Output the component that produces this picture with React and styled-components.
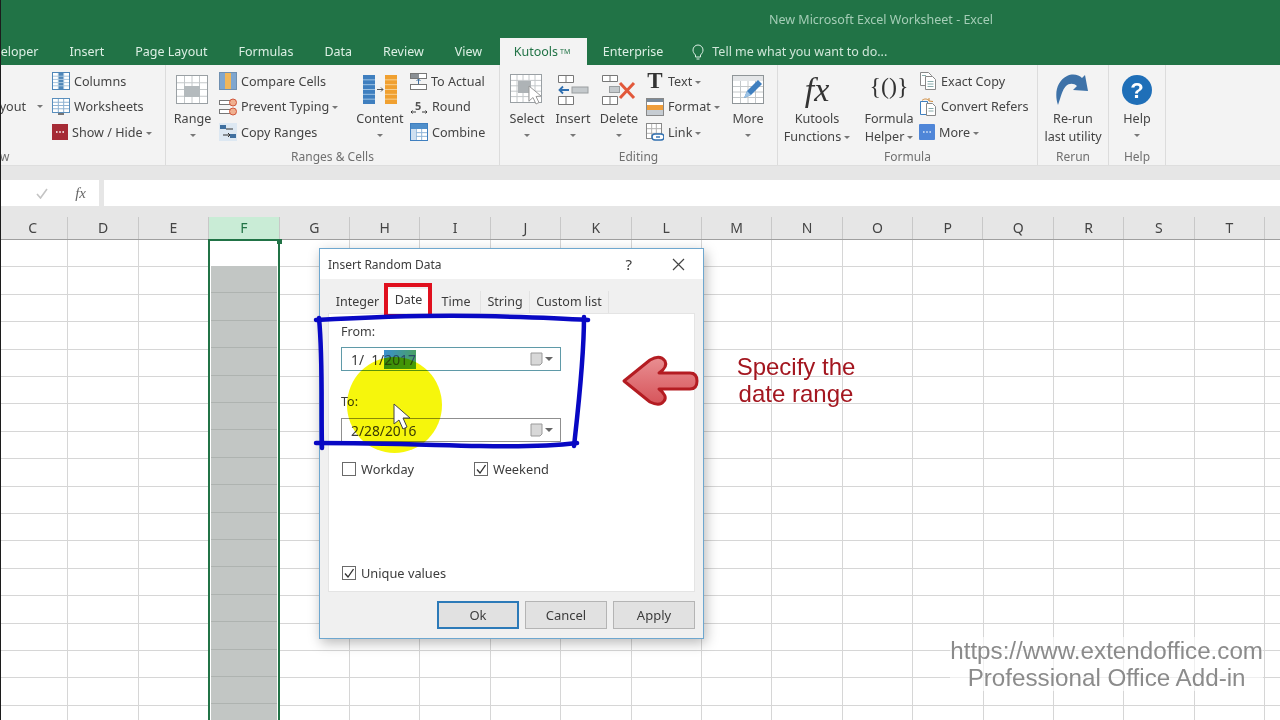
import React from 'react';
import styled, { createGlobalStyle } from 'styled-components';

const UI_FONT = '"Noto Sans", "Open Sans", sans-serif';

const GlobalStyle = createGlobalStyle`
  html, body { margin: 0; padding: 0; background: #fff; }
  #root { width: 1280px; height: 720px; }
`;

const Page = styled.div`
  position: relative;
  width: 1280px;
  height: 720px;
  overflow: hidden;
  display: flex;
  flex-direction: column;
  font-family: ${UI_FONT};
  font-size: 12.6px;
  color: #444;
  background: #fff;
`;

const TitleBar = styled.div`
  height: 38px;
  background: #217346;
  color: #a4cdb6;
  display: flex;
  justify-content: flex-end;
  align-items: center;
  padding: 0 287px 0 0;
  font-size: 12.5px;
`;

const TabStrip = styled.div`
  height: 27px;
  background: #217346;
  display: flex;
  margin-left: -37px;
`;

const Tab = styled.div`
  padding: ${({ $active }) => ($active ? '0 17px 0 14px' : '0 15.5px')};
  margin-left: ${({ $active }) => ($active ? 2 : 0)}px;
  display: flex;
  align-items: center;
  background: ${({ $active }) => ($active ? '#f3f3f3' : 'transparent')};
  color: ${({ $active }) => ($active ? '#217346' : '#dcefe4')};
  white-space: nowrap;
  font-size: 12.5px;
  sup { font-size: 7px; margin-left: 2px; }
`;

const TellMe = styled(Tab)`
  margin-left: -2px;
  gap: 8px;
  color: #cfe6d8;
`;

const Ribbon = styled.div`
  height: 100px;
  display: flex;
  background: #f3f3f3;
`;

const Group = styled.div`
  width: ${({ $w }) => $w}px;
  flex: none;
  box-sizing: border-box;
  display: flex;
  flex-direction: column;
  border-right: 1px solid #dcdcdc;
`;

const GroupBody = styled.div`
  height: 83px;
  display: flex;
  padding-left: ${({ $pad }) => $pad || 0}px;
  overflow: hidden;
`;

const GroupLabel = styled.div`
  height: 17px;
  line-height: 17px;
  text-align: ${({ $align }) => $align || 'center'};
  font-size: 12px;
  color: #707070;
  overflow: hidden;
`;

const BigButton = styled.div`
  width: ${({ $w }) => $w}px;
  flex: none;
  display: flex;
  flex-direction: column;
  align-items: center;
  margin-left: ${({ $ml }) => $ml || 0}px;
`;

const BigIcon = styled.div`
  height: 45px;
  display: flex;
  align-items: center;
  justify-content: center;
  padding-top: 4px;
  box-sizing: border-box;
`;

const BigLabel = styled.div`
  line-height: 18px;
  text-align: center;
  white-space: nowrap;
`;

const CaretRow = styled.div`
  height: 14px;
  display: flex;
  align-items: center;
`;

const Caret = styled.span`
  display: inline-block;
  width: 0;
  height: 0;
  margin-left: ${({ $ml }) => $ml ?? 3}px;
  vertical-align: middle;
  border-left: 3px solid transparent;
  border-right: 3px solid transparent;
  border-top: 3px solid #777;
`;

const List = styled.div`
  width: ${({ $w }) => $w}px;
  flex: none;
  padding-top: 3.5px;
  margin-left: ${({ $ml }) => $ml || 0}px;
`;

const ListRow = styled.div`
  height: 25.5px;
  display: flex;
  align-items: center;
  gap: 4px;
  white-space: nowrap;
`;

const ClippedLayout = styled.div`
  width: 52px;
  flex: none;
  margin-top: 29px;
  height: 25px;
  line-height: 25px;
  white-space: nowrap;
  display: flex;
  justify-content: flex-end;
  align-items: center;
  padding-right: 9px;
  box-sizing: border-box;
`;

const FormulaRow = styled.div`
  height: 42px;
  box-sizing: border-box;
  background: #e6e6e6;
  border-top: 1px solid #dedede;
  padding: 14px 0 1px;
  display: flex;
  gap: 5px;
`;

const FormulaButtons = styled.div`
  width: 99px;
  background: #fff;
  display: flex;
  align-items: center;
  justify-content: flex-end;
  gap: 27px;
  padding-right: 13px;
  box-sizing: border-box;
`;

const FxLabel = styled.span`
  font-family: "Liberation Serif", serif;
  font-style: italic;
  font-size: 15px;
  color: #666;
`;

const FormulaInput = styled.div`
  flex: 1;
  background: #fff;
`;

const ColumnHeaders = styled.div`
  height: 33px;
  box-sizing: border-box;
  padding-top: 10px;
  background: #e6e6e6;
  border-bottom: 1px solid #9f9f9f;
  display: flex;
  margin-left: -2px;
  width: 1290px;
`;

const ColumnCell = styled.div`
  width: 70.4px;
  flex: none;
  box-sizing: border-box;
  text-align: center;
  line-height: 22px;
  font-size: 14px;
  color: ${({ $active }) => ($active ? '#217346' : '#444')};
  background: ${({ $active }) => ($active ? '#c9ecd6' : 'transparent')};
  border-right: 1px solid #c8c8c8;
`;

const Sheet = styled.div`
  flex: 1;
  position: relative;
  background-color: #fff;
  background-image:
    repeating-linear-gradient(to right, transparent 0, transparent 69.4px, #d6d6d6 69.4px, #d6d6d6 70.4px),
    repeating-linear-gradient(to bottom, transparent 0, transparent 26.4px, #d6d6d6 26.4px, #d6d6d6 27.4px);
  background-position: -2px 0, 0 0;
`;

const SelectedColumn = styled.div`
  position: absolute;
  left: 208px;
  top: -1px;
  bottom: -2px;
  width: 72px;
  box-sizing: border-box;
  border: 2px solid #217346;
  display: flex;
  flex-direction: column;
  background: #fff;
  &::after {
    content: '';
    position: absolute;
    right: -4px;
    top: -2px;
    width: 5px;
    height: 5px;
    background: #217346;
  }
`;

const SelectedBlank = styled.div`
  height: 25px;
  flex: none;
`;

const SelectedFill = styled.div`
  flex: 1;
  margin: 0 1px;
  background-color: #c2c6c4;
  background-image: repeating-linear-gradient(to bottom, transparent 0, transparent 26.4px, #aeb3b0 26.4px, #aeb3b0 27.4px);
`;

const Dialog = styled.div`
  position: absolute;
  left: 319px;
  top: 248px;
  width: 385px;
  height: 391px;
  box-sizing: border-box;
  border: 1.5px solid #6ea7cf;
  background: #f0f0f0;
  display: flex;
  flex-direction: column;
  box-shadow: 2px 4px 12px rgba(0, 0, 0, 0.28);
  color: #3c3c3c;
`;

const DialogTitle = styled.div`
  height: 30px;
  flex: none;
  background: #fff;
  display: flex;
  align-items: center;
  padding: 0 18px 0 8px;
  font-size: 12px;
`;

const TitleText = styled.span`
  flex: 1;
`;

const TitleButton = styled.span`
  font-size: 15px;
  margin-right: 40px;
`;

const DialogBody = styled.div`
  flex: 1;
  display: flex;
  flex-direction: column;
  padding: 12px 8px 9px 8px;
  min-height: 0;
`;

const DialogTabs = styled.div`
  height: 22px;
  flex: none;
  display: flex;
  padding-left: 2px;
`;

const DialogTab = styled.div`
  width: ${({ $w }) => $w}px;
  flex: none;
  text-align: center;
  line-height: 22px;
  font-size: 12.5px;
  background: ${({ $active }) => ($active ? '#fff' : '#f0f0f0')};
  margin-top: ${({ $active }) => ($active ? -2 : 0)}px;
  height: ${({ $active }) => ($active ? 24 : 22)}px;
  border-right: 1px solid #e2e2e2;
`;

const Panel = styled.div`
  flex: 1;
  background: #fff;
  border: 1px solid #e4e4e4;
  display: flex;
  flex-direction: column;
  padding: 9px 12px 9px 12px;
  min-height: 0;
`;

const FieldLabel = styled.div`
  line-height: 18px;
  font-size: 12.5px;
  margin-bottom: ${({ $mb }) => $mb}px;
`;

const DateField = styled.div`
  width: 220px;
  height: 24px;
  box-sizing: border-box;
  border: 1px solid ${({ $focus }) => ($focus ? '#5f9aa8' : '#8f8f8f')};
  display: flex;
  align-items: center;
  justify-content: space-between;
  padding: 0 6px 0 9px;
  margin-bottom: ${({ $mb }) => $mb}px;
  font-size: 13.8px;
  white-space: pre;
`;

const Highlight = styled.span`
  background: linear-gradient(100deg, #3a8fd0, #4aa25a);
  color: #2a4a6a;
`;

const CheckLine = styled.div`
  display: flex;
  align-items: center;
  gap: 50px;
  padding-left: 1px;
  margin-top: ${({ $mt }) => $mt};
`;

const CheckItem = styled.label`
  display: flex;
  align-items: center;
  gap: 5px;
  width: ${({ $w }) => $w}px;
  font-size: 12.8px;
  line-height: 18px;
`;

const CheckBox = styled.span`
  width: 12px;
  height: 12px;
  flex: none;
  border: 1.5px solid #6a6a6a;
  background: #fff;
  display: flex;
  align-items: center;
  justify-content: center;
`;

const DialogFooter = styled.div`
  flex: none;
  display: flex;
  justify-content: flex-end;
  gap: 6px;
  padding-top: 9px;
`;

const DialogButton = styled.div`
  width: 82px;
  height: 28px;
  box-sizing: border-box;
  background: #e1e1e1;
  border: ${({ $primary }) => ($primary ? '2px solid #2c7ab8' : '1px solid #b4b4b4')};
  display: flex;
  align-items: center;
  justify-content: center;
  font-size: 13px;
`;

const YellowSpot = styled.div`
  position: absolute;
  left: 347px;
  top: 357px;
  width: 95px;
  height: 96px;
  border-radius: 50%;
  background: #f6f60c;
  mix-blend-mode: multiply;
`;

const Markup = styled.svg`
  position: absolute;
  left: 0;
  top: 0;
  pointer-events: none;
`;

const Callout = styled.div`
  position: absolute;
  left: 716px;
  top: 353px;
  width: 160px;
  text-align: center;
  font-family: "Liberation Sans", Arial, sans-serif;
  font-size: 24px;
  line-height: 27px;
  color: #a3161f;
`;

const Watermark = styled.div`
  position: absolute;
  right: 17px;
  top: 637px;
  text-align: center;
  font-family: "Liberation Sans", Arial, sans-serif;
  font-size: 24.2px;
  line-height: 27px;
  color: #8b8b8b;
  background: rgba(255, 255, 255, 0.6);
`;

const LeftEdge = styled.div`
  position: absolute;
  left: 0;
  top: 0;
  bottom: 0;
  width: 1px;
  background: #1c1c1c;
`;

/* ---- ribbon icons ---- */
const Ico = ({ w, h, children }) => (
  <svg width={w} height={h} viewBox={`0 0 ${w} ${h}`} fill="none">{children}</svg>
);

const gridLines = (x, y, w, h, cols, rows, color) => {
  const lines = [];
  for (let i = 1; i < cols; i++) lines.push(<path key={`c${i}`} d={`M${x + (w / cols) * i} ${y}V${y + h}`} stroke={color} />);
  for (let i = 1; i < rows; i++) lines.push(<path key={`r${i}`} d={`M${x} ${y + (h / rows) * i}H${x + w}`} stroke={color} />);
  return lines;
};

const ColumnsIcon = () => (
  <Ico w={18} h={18}>
    <rect x=".5" y=".5" width="17" height="17" fill="#fff" stroke="#4f86b8" />
    <rect x="6" y="1" width="6" height="16" fill="#4f86b8" />
    {gridLines(1, 1, 16, 16, 3, 5, '#a9c6de')}
  </Ico>
);

const SheetsIcon = () => (
  <Ico w={18} h={18}>
    <rect x=".5" y=".5" width="17" height="14" fill="#fff" stroke="#5a8fbd" />
    {gridLines(1, 1, 16, 13, 3, 4, '#8fb2d2')}
    <path d="M6 16h6" stroke="#777" strokeWidth="2" />
  </Ico>
);

const ShowHideIcon = () => (
  <Ico w={16} h={16}>
    <rect width="16" height="16" fill="#a52a35" />
    <path d="M4 8h1.6M7.2 8h1.6M10.4 8H12" stroke="#fff" strokeWidth="1.6" />
  </Ico>
);

const RangeIcon = () => (
  <Ico w={33} h={30}>
    <rect x=".5" y=".5" width="31" height="28" fill="#fff" stroke="#9aa0a4" />
    {gridLines(1, 1, 30, 27, 4, 4, '#c4c8ca')}
    <rect x="8" y="11" width="16" height="11" fill="#b4babd" />
  </Ico>
);

const CompareIcon = () => (
  <Ico w={18} h={18}>
    <rect x=".5" y=".5" width="17" height="17" fill="#fff" stroke="#6f8fb0" />
    <rect x="1" y="1" width="5" height="16" fill="#7fa6cf" />
    <rect x="6" y="1" width="6" height="16" fill="#f0b65a" />
    <rect x="12" y="1" width="5" height="16" fill="#7fa6cf" />
  </Ico>
);

const PreventIcon = () => (
  <Ico w={18} h={18}>
    <rect x=".5" y="2.5" width="11" height="4" stroke="#777" fill="#fff" />
    <rect x=".5" y="11.5" width="11" height="4" stroke="#777" fill="#fff" />
    <circle cx="14" cy="4.5" r="3.5" fill="#f0b090" stroke="#d0563a" />
    <circle cx="14" cy="13.5" r="3.5" fill="#f0b090" stroke="#d0563a" />
  </Ico>
);

const CopyRangesIcon = () => (
  <Ico w={18} h={18}>
    <rect width="18" height="18" fill="#dde8f2" />
    <rect x="1" y="2" width="6" height="4" fill="#3f6f9f" />
    <rect x="11" y="11" width="6" height="4" fill="#3f6f9f" />
    <path d="M4 12h7M9 10l2 2-2 2M14 6H7" stroke="#333" />
  </Ico>
);

const ContentIcon = () => (
  <Ico w={34} h={29}>
    <rect width="12" height="29" fill="#3f7fbf" />
    {gridLines(0, 0, 12, 29, 1, 6, '#9cc2e4')}
    <rect x="22" width="12" height="29" fill="#f0a030" />
    {gridLines(22, 0, 12, 29, 1, 6, '#f8cf90')}
    <path d="M14 14.5h6M18 12.5l2 2-2 2" stroke="#555" />
  </Ico>
);

const ToActualIcon = () => (
  <Ico w={17} h={17}>
    <rect x=".5" y=".5" width="16" height="5" fill="#fff" stroke="#777" />
    <rect x="1" y="1" width="8" height="4" fill="#8a8f94" />
    <rect x=".5" y="11.5" width="16" height="5" fill="#fff" stroke="#777" />
    <path d="M8.5 6v5M6.5 8l2-2 2 2" stroke="#3f6f9f" />
  </Ico>
);

const RoundIcon = () => (
  <Ico w={18} h={18}>
    <text x="5" y="11.5" fontSize="11" fontWeight="700" fontFamily="Noto Sans, sans-serif" fill="#555">5</text>
    <path d="M1 14h5M2.500 12.500 1 14l1.500 1.500M12 14h5M15.500 12.500 17 14l-1.500 1.500" stroke="#3a3a3a" />
  </Ico>
);

const CombineIcon = () => (
  <Ico w={18} h={18}>
    <rect x=".5" y=".5" width="17" height="17" fill="#fff" stroke="#3f7fbf" />
    <rect x="1" y="1" width="16" height="5" fill="#4f8fcb" />
    {gridLines(1, 6, 16, 11, 3, 3, '#8fb5d8')}
    <rect x="1" y="6" width="5" height="11" fill="#cfe0f0" />
  </Ico>
);

const SelectIcon = () => (
  <Ico w={34} h={32}>
    <rect x=".5" y=".5" width="31" height="28" fill="#fff" stroke="#9aa0a4" />
    {gridLines(1, 1, 30, 27, 5, 5, '#c4c8ca')}
    <rect x="8" y="7" width="13" height="12" fill="#aeb3b6" />
    <path d="M19 12l0 15 4-3.500 3 6.500 3-1.500-3-6 5-.5z" fill="#fff" stroke="#9a9a9a" />
  </Ico>
);

const InsertIcon = () => (
  <Ico w={31} h={30}>
    <path d="M.5.5h15v7H.5zM8 .5v7" stroke="#777" fill="#fff" />
    <path d="M2 15h9M5 11.500 1.500 15 5 18.500" stroke="#2f6fb0" strokeWidth="1.8" />
    <rect x="14" y="12" width="16" height="6" fill="#c4c9cc" stroke="#9a9ea0" />
    <path d="M.5 21.500h15v8H.5zM8 21.500v8" stroke="#777" fill="#fff" />
  </Ico>
);

const DeleteIcon = () => (
  <Ico w={34} h={30}>
    <path d="M.5.5h15v6H.5zM8 .5v6" stroke="#777" fill="#fff" />
    <rect x="7.500" y="11.500" width="10" height="6" fill="#c4c9cc" stroke="#9a9ea0" />
    <path d="M.5 21.500h15v8H.5zM8 21.500v8" stroke="#777" fill="#fff" />
    <path d="M18 8l14 15M32 8 18 23" stroke="#e2583a" strokeWidth="3" />
  </Ico>
);

const TextT = styled.span`
  width: 18px;
  font-family: "Liberation Serif", serif;
  font-weight: 700;
  font-size: 23px;
  line-height: 18px;
  color: #333;
  text-align: center;
`;

const FormatIcon = () => (
  <Ico w={18} h={18}>
    <rect x=".5" y=".5" width="17" height="17" fill="#fff" stroke="#888" />
    <rect x="1" y="1" width="16" height="3" fill="#7a8a9a" />
    <rect x="1" y="7" width="16" height="5" fill="#ef9e3c" />
    <rect x="1" y="12" width="16" height="5" fill="#c6ccd2" />
  </Ico>
);

const LinkIcon = () => (
  <Ico w={18} h={18}>
    <rect x=".5" y=".5" width="15" height="15" fill="#fff" stroke="#888" />
    {gridLines(1, 1, 14, 14, 3, 3, '#b4b4b4')}
    <rect x="6" y="11" width="12" height="6" rx="3" fill="#fff" stroke="#2f6fb0" strokeWidth="1.4" />
    <path d="M10 14h4" stroke="#2f6fb0" strokeWidth="1.4" />
  </Ico>
);

const MoreIcon = () => (
  <Ico w={32} h={29}>
    <rect x=".5" y=".5" width="31" height="28" fill="#fff" stroke="#8f9598" />
    {gridLines(1, 6, 30, 22, 4, 4, '#c4c8ca')}
    <rect x="1" y="1" width="30" height="5" fill="#e4e6e8" />
    <path d="M12 23l3-7 11-11 4 4-11 11z" fill="#3f7fbf" />
    <path d="M12 23l3-7 4 4z" fill="#9cc2e4" />
  </Ico>
);

const FxBig = styled.span`
  font-family: "Liberation Serif", serif;
  font-style: italic;
  font-size: 34px;
  line-height: 40px;
  color: #333;
`;

const BraceBig = styled.span`
  font-family: "Liberation Serif", serif;
  font-size: 24px;
  line-height: 36px;
  color: #333;
  margin-bottom: 7px;
`;

const ExactIcon = () => (
  <Ico w={18} h={18}>
    <path d="M1.500.5h8l3 3v10h-11z" fill="#fff" stroke="#888" />
    <path d="M6.500 4.500h7l3 3v10h-10z" fill="#fff" stroke="#888" />
    <path d="M8.500 9.500h6M8.500 12h6M8.500 14.500h6M3 3.500h4" stroke="#8aa" />
  </Ico>
);

const ConvertIcon = () => (
  <Ico w={18} h={18}>
    <path d="M1.500 3.500h7v13h-7z" fill="#fff" stroke="#3f7fbf" />
    <path d="M7.500 5.500h6l3 3v9h-9z" fill="#fff" stroke="#888" />
    <path d="M9.500 10.500h5M9.500 13h5" stroke="#8aa" />
    <path d="M3 2.500C5 .5 8 .5 10 2.500M14 3.500 10 3V0" stroke="#d08a3a" />
  </Ico>
);

const MoreBlueIcon = () => (
  <Ico w={16} h={16}>
    <rect width="16" height="16" rx="1" fill="#4f86d8" />
    <path d="M4 8h1.600M7.200 8h1.600M10.400 8H12" stroke="#d8e6f8" strokeWidth="1.5" />
  </Ico>
);

const RerunIcon = () => (
  <Ico w={36} h={33}>
    <path d="M3 32C-1 20 2 8 12 3c6-3 12-1 15 2l3-3 3 16-15-1 4-4c-3-3-8-3-11 0-4 4-5 11-8 19z" fill="#3e72a8" />
  </Ico>
);

const HelpIcon = () => (
  <Ico w={30} h={30}>
    <circle cx="15" cy="15" r="15" fill="#1f6fb8" />
    <text x="15" y="23" textAnchor="middle" fontSize="22" fontWeight="700" fontFamily="Liberation Sans, sans-serif" fill="#fff">?</text>
  </Ico>
);

const BulbIcon = () => (
  <Ico w={12} h={16}>
    <path d="M3.500 11C2 9.500 1 8 1 6a5 5 0 0 1 10 0c0 2-1 3.500-2.500 5v2h-5zM4.500 15h3" stroke="#dcefe4" />
  </Ico>
);

const CheckMark = () => (
  <Ico w={10} h={10}>
    <path d="M1 5.500 4 9 9.500 1" stroke="#333" strokeWidth="1.300" />
  </Ico>
);

const CalendarIcon = () => (
  <Ico w={24} h={14}>
    <path d="M1 1h11v10l-2 2H1z" fill="#d8d8d8" stroke="#9a9a9a" />
    <path d="M15 5h8l-4 4z" fill="#666" />
  </Ico>
);

const COLUMNS = ['C', 'D', 'E', 'F', 'G', 'H', 'I', 'J', 'K', 'L', 'M', 'N', 'O', 'P', 'Q', 'R', 'S', 'T'];
const TABS = ['Developer', 'Insert', 'Page Layout', 'Formulas', 'Data', 'Review', 'View'];

const Big = ({ w, ml, icon, lines, caret = true }) => (
  <BigButton $w={w} $ml={ml}>
    <BigIcon>{icon}</BigIcon>
    {lines.map((line, i) => (
      <BigLabel key={line}>
        {line}
        {caret && lines.length > 1 && i === 1 && <Caret />}
      </BigLabel>
    ))}
    {caret && lines.length === 1 && (
      <CaretRow><Caret $ml={0} /></CaretRow>
    )}
  </BigButton>
);

const Item = ({ icon, label, caret }) => (
  <ListRow>
    {icon}
    <span>{label}{caret && <Caret />}</span>
  </ListRow>
);

const App = () => (
  <Page>
    <GlobalStyle />
    <TitleBar>New Microsoft Excel Worksheet - Excel</TitleBar>
    <TabStrip>
      {TABS.map((t) => <Tab key={t}>{t}</Tab>)}
      <Tab $active>Kutools<sup>TM</sup></Tab>
      <Tab>Enterprise</Tab>
      <TellMe><BulbIcon />Tell me what you want to do...</TellMe>
    </TabStrip>

    <Ribbon>
      <Group $w={166}>
        <GroupBody>
          <ClippedLayout><span>yout</span><Caret $ml={11} /></ClippedLayout>
          <List>
            <Item icon={<ColumnsIcon />} label="Columns" />
            <Item icon={<SheetsIcon />} label="Worksheets" />
            <Item icon={<ShowHideIcon />} label="Show / Hide" caret />
          </List>
        </GroupBody>
        <GroupLabel $align="left">w</GroupLabel>
      </Group>

      <Group $w={334}>
        <GroupBody>
          <Big w={53} icon={<RangeIcon />} lines={['Range']} />
          <List $w={135}>
            <Item icon={<CompareIcon />} label="Compare Cells" />
            <Item icon={<PreventIcon />} label="Prevent Typing" caret />
            <Item icon={<CopyRangesIcon />} label="Copy Ranges" />
          </List>
          <Big w={52} icon={<ContentIcon />} lines={['Content']} />
          <List $w={90} $ml={4}>
            <Item icon={<ToActualIcon />} label="To Actual" />
            <Item icon={<RoundIcon />} label="Round" />
            <Item icon={<CombineIcon />} label="Combine" />
          </List>
        </GroupBody>
        <GroupLabel>Ranges &amp; Cells</GroupLabel>
      </Group>

      <Group $w={278}>
        <GroupBody $pad={4}>
          <Big w={46} icon={<SelectIcon />} lines={['Select']} />
          <Big w={46} icon={<InsertIcon />} lines={['Insert']} />
          <Big w={46} icon={<DeleteIcon />} lines={['Delete']} />
          <List $w={79} $ml={4}>
            <Item icon={<TextT>T</TextT>} label="Text" caret />
            <Item icon={<FormatIcon />} label="Format" caret />
            <Item icon={<LinkIcon />} label="Link" caret />
          </List>
          <Big w={46} icon={<MoreIcon />} lines={['More']} />
        </GroupBody>
        <GroupLabel>Editing</GroupLabel>
      </Group>

      <Group $w={260}>
        <GroupBody $pad={5}>
          <Big w={68} icon={<FxBig>fx</FxBig>} lines={['Kutools', 'Functions']} />
          <Big w={56} ml={10} icon={<BraceBig>{'{()}'}</BraceBig>} lines={['Formula', 'Helper']} />
          <List $w={118} $ml={2}>
            <Item icon={<ExactIcon />} label="Exact Copy" />
            <Item icon={<ConvertIcon />} label="Convert Refers" />
            <Item icon={<MoreBlueIcon />} label="More" caret />
          </List>
        </GroupBody>
        <GroupLabel>Formula</GroupLabel>
      </Group>

      <Group $w={71}>
        <GroupBody>
          <Big w={70} icon={<RerunIcon />} lines={['Re-run', 'last utility']} caret={false} />
        </GroupBody>
        <GroupLabel>Rerun</GroupLabel>
      </Group>

      <Group $w={57}>
        <GroupBody>
          <Big w={56} icon={<HelpIcon />} lines={['Help']} />
        </GroupBody>
        <GroupLabel>Help</GroupLabel>
      </Group>
    </Ribbon>

    <FormulaRow>
      <FormulaButtons>
        <Ico w={12} h={12}><path d="M1 7l3.500 4L11 2" stroke="#c4c4c4" strokeWidth="1.600" /></Ico>
        <FxLabel>fx</FxLabel>
      </FormulaButtons>
      <FormulaInput />
    </FormulaRow>

    <ColumnHeaders>
      {COLUMNS.map((c) => <ColumnCell key={c} $active={c === 'F'}>{c}</ColumnCell>)}
    </ColumnHeaders>

    <Sheet>
      <SelectedColumn>
        <SelectedBlank />
        <SelectedFill />
      </SelectedColumn>
    </Sheet>

    <Dialog>
      <DialogTitle>
        <TitleText>Insert Random Data</TitleText>
        <TitleButton>?</TitleButton>
        <Ico w={13} h={13}><path d="M1 1l11 11M12 1 1 12" stroke="#444" strokeWidth="1.200" /></Ico>
      </DialogTitle>
      <DialogBody>
        <DialogTabs>
          <DialogTab $w={55}>Integer</DialogTab>
          <DialogTab $w={45} $active>Date</DialogTab>
          <DialogTab $w={48}>Time</DialogTab>
          <DialogTab $w={48}>String</DialogTab>
          <DialogTab $w={78}>Custom list</DialogTab>
        </DialogTabs>
        <Panel>
          <FieldLabel $mb={6}>From:</FieldLabel>
          <DateField $focus $mb={22}>
            <span>1/  1/<Highlight>2017</Highlight></span>
            <CalendarIcon />
          </DateField>
          <FieldLabel $mb={7}>To:</FieldLabel>
          <DateField $mb={18}>
            <span>2/28/2016</span>
            <CalendarIcon />
          </DateField>
          <CheckLine>
            <CheckItem $w={82}><CheckBox />Workday</CheckItem>
            <CheckItem $w={80}><CheckBox><CheckMark /></CheckBox>Weekend</CheckItem>
          </CheckLine>
          <CheckLine $mt="auto">
            <CheckItem $w={120}><CheckBox><CheckMark /></CheckBox>Unique values</CheckItem>
          </CheckLine>
        </Panel>
        <DialogFooter>
          <DialogButton $primary>Ok</DialogButton>
          <DialogButton>Cancel</DialogButton>
          <DialogButton>Apply</DialogButton>
        </DialogFooter>
      </DialogBody>
    </Dialog>

    <YellowSpot />

    <Markup width="1280" height="720" viewBox="0 0 1280 720" fill="none">
      <defs>
        <linearGradient id="arrowFill" x1="0" y1="0" x2="0" y2="1">
          <stop offset="0" stopColor="#e98f92" />
          <stop offset="1" stopColor="#d6545a" />
        </linearGradient>
      </defs>
      <path d="M386 285h44v31h-44z" stroke="#e0101e" strokeWidth="4" />
      <g stroke="#0808c4" strokeWidth="4.500" strokeLinecap="round">
        <path d="M316 320C370 317 430 315 480 316S560 318 588 320" />
        <path d="M319 318C323 360 321 410 322 448" />
        <path d="M584 317C584 360 578 410 574 446" />
        <path d="M316 443C380 443 430 445 480 446S560 445 577 443" />
      </g>
      <path d="M624 381L650 360Q660 354 665 361Q668 367 659 373L690 373Q697 373 697 381Q697 389 690 389L659 389Q668 396 664 401Q660 407 650 402Z" fill="url(#arrowFill)" stroke="#b41c22" strokeWidth="3" strokeLinejoin="round" />
      <path d="M394 404V424L399 420 403 429 407 427 403 418H410Z" fill="#fff" stroke="#444" />
    </Markup>

    <Callout>Specify the<br />date range</Callout>
    <Watermark>https://www.extendoffice.com<br />Professional Office Add-in</Watermark>
    <LeftEdge />
  </Page>
);

export default App;
